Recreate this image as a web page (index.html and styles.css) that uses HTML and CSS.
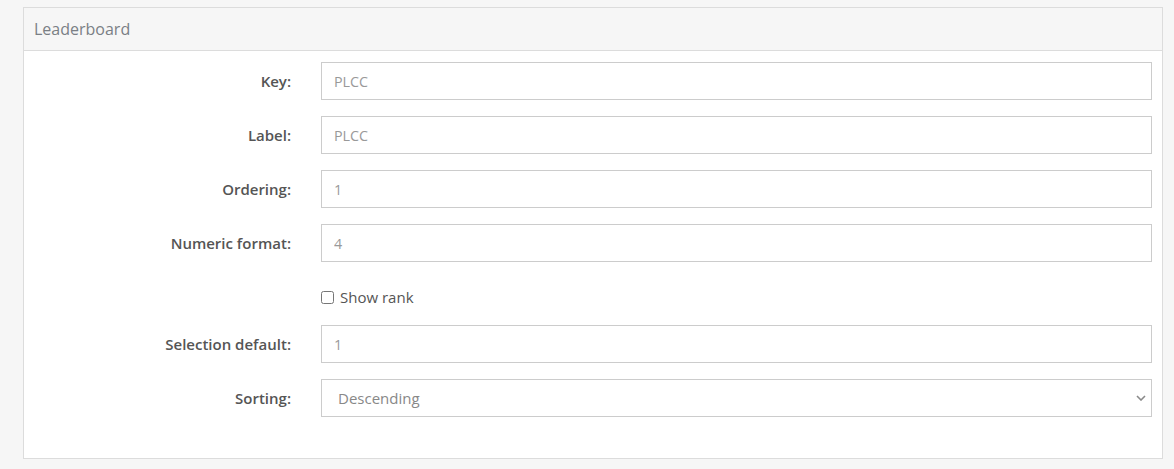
FILE: index.html
```html
<!DOCTYPE html>
<html>
<head>
<meta charset="utf-8">
<link rel="stylesheet" href="styles.css">
</head>
<body>
<div class="page">
  <div class="panel">
    <div class="panel-heading">Leaderboard</div>
    <div class="panel-body">
      <form class="form">
        <label class="lbl">Key:</label>
        <input class="ctl" type="text" value="PLCC">

        <label class="lbl">Label:</label>
        <input class="ctl" type="text" value="PLCC">

        <label class="lbl">Ordering:</label>
        <input class="ctl" type="text" value="1">

        <label class="lbl">Numeric format:</label>
        <input class="ctl" type="text" value="4">

        <span class="lbl"></span>
        <label class="check"><input type="checkbox" class="cb"><span>Show rank</span></label>

        <label class="lbl">Selection default:</label>
        <input class="ctl" type="text" value="1">

        <label class="lbl">Sorting:</label>
        <div class="select-wrap">
          <select class="ctl sel"><option>Descending</option><option>Ascending</option></select>
          <svg class="chev" width="10" height="6" viewBox="0 0 10 6"><path d="M1 1 L5 5 L9 1" fill="none" stroke="#8a8a8a" stroke-width="1.6"/></svg>
        </div>
      </form>
    </div>
  </div>
</div>
</body>
</html>
```
FILE: styles.css
```css
html, body {
  margin: 0;
  padding: 0;
  background: #f6f6f6;
  font-family: "Open Sans", "Noto Sans", sans-serif;
}
.page {
  padding: 7px 11px 0 23px;
}
.panel {
  background: #fff;
  border: 1px solid #dcdcdc;
}
.panel-heading {
  background: #f6f6f6;
  border-bottom: 1px solid #dcdcdc;
  height: 42px;
  line-height: 42px;
  padding-left: 10px;
  font-size: 16px;
  color: #7a7f85;
}
.panel-body {
  padding: 11px 10px 41px 0;
}
.form {
  display: grid;
  grid-template-columns: 267px 831px;
  column-gap: 30px;
  row-gap: 16px;
  align-items: center;
}
.lbl {
  text-align: right;
  font-weight: 600;
  font-size: 15px;
  color: #555;
}
.ctl {
  box-sizing: border-box;
  width: 831px;
  height: 38px;
  margin: 0;
  border: 1px solid #cccccc;
  border-radius: 0;
  padding: 0 12px;
  font-family: inherit;
  font-size: 14.3px;
  color: #999;
  background: #fff;
  outline: none;
}
.check {
  display: flex;
  align-items: center;
  height: 31px;
  padding-top: 7px;
  box-sizing: border-box;
  font-size: 15px;
  color: #555;
}
.cb {
  width: 13px;
  height: 13px;
  margin: 0 6px 0 0;
}
.select-wrap {
  position: relative;
  width: 831px;
}
.sel {
  appearance: none;
  -webkit-appearance: none;
  padding-left: 16px;
  font-size: 15px;
  color: #888;
}
.chev {
  position: absolute;
  right: 6px;
  top: 16px;
}
```
